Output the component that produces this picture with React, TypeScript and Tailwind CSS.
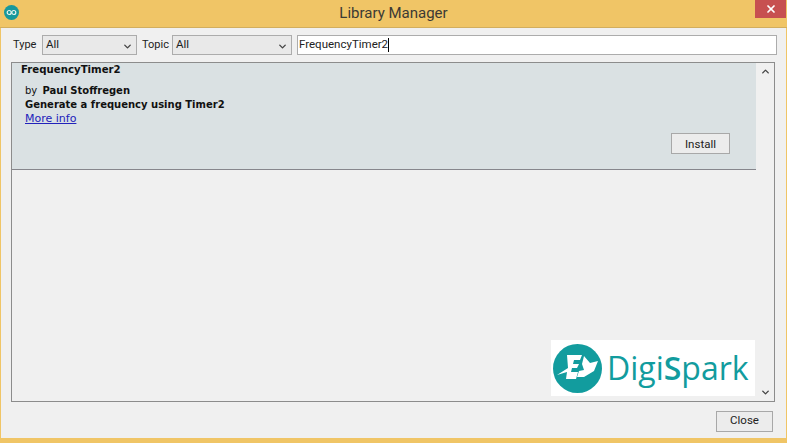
import { ChevronDown, ChevronUp, X } from "lucide-react";

const uiFont = "font-['Roboto','Noto_Sans',sans-serif]";
const itemFont = "font-['DejaVu_Sans',sans-serif]";

const ComboBox = ({ width }: { width: string }) => {
  return (
    <div className={`${width} h-[20px] shrink-0 flex items-center justify-between border border-[#acacac] bg-[#e9e9e9] pl-[3px] pr-[3px]`}>
      <span className="text-[11.5px] text-[#222]">All</span>
      <ChevronDown className="w-[11px] h-[11px] mt-[3px] text-[#444]" strokeWidth={3} />
    </div>
  );
};

const ArduinoLogo = () => {
  return (
    <svg width="15" height="15" viewBox="0 0 15 15">
      <circle cx="7.5" cy="7.5" r="7.5" fill="#17989c" />
      <circle cx="5.2" cy="7.5" r="2" fill="none" stroke="#e8f4ee" strokeWidth="1.2" />
      <circle cx="9.8" cy="7.5" r="2" fill="none" stroke="#e8f4ee" strokeWidth="1.2" />
    </svg>
  );
};

const DigiSparkMark = () => {
  return (
    <svg width="49" height="49" viewBox="0 0 49 49" className="shrink-0">
      <circle cx="24.5" cy="24.5" r="24.5" fill="#129c9e" />
      {/* E block with the streak running out to the left */}
      <path d="M14 11 H29 L27 16 H21 L20 20 H26 L24 24 H19 L18 28 H25 L23 35 H13 L14 28 L4 31 L15 24 Z" fill="#fff" />
      {/* wing on the right */}
      <path d="M29 20 L31 12 L37 19 L45 17 L41 27 L31 33 H24 L26 27 L31 26 Z" fill="#fff" />
    </svg>
  );
};

export default function App() {
  return (
    <div className={`${uiFont} w-[787px] h-[443px] flex flex-col overflow-hidden bg-[#f0c566]`}>
      <header className="relative h-[28px] shrink-0 flex items-center justify-center border-b border-[#d2ae5e]">
        <div className="absolute left-[4px] top-[5px]">
          <ArduinoLogo />
        </div>
        <span className="text-[15px] text-[#3c3a34] -mt-[1px]">Library Manager</span>
        <button className="absolute right-[1px] top-0 w-[31px] h-[18px] flex items-center justify-center bg-[#c75050]">
          <X className="w-[12px] h-[12px] text-white" strokeWidth={3.5} />
        </button>
      </header>

      <div className="ml-[1px] mr-[1px] mb-[5px] flex-1 flex flex-col bg-[#f0f0f0] pl-[10px] pr-[9px] min-h-0 relative">
        <div className="flex items-center h-[34px] shrink-0">
          <span className="w-[31px] pl-[2px] shrink-0 text-[11px] text-[#222]">Type</span>
          <ComboBox width="w-[95px]" />
          <span className="w-[35px] pl-[5px] shrink-0 text-[11px] text-[#222]">Topic</span>
          <ComboBox width="w-[120px]" />
          <div className="flex-1 h-[20px] ml-[5px] flex items-center border border-[#acacac] bg-white pl-[1px] pr-[3px]">
            <span className="text-[11.5px] text-[#222]">FrequencyTimer2</span>
            <span className="w-px h-[14px] bg-black" />
          </div>
        </div>

        <div className="h-[340px] flex border border-[#8c8c8c] shrink-0 mr-[2px]">
          <div className="flex-1 flex flex-col min-w-0">
            <div className={`${itemFont} relative h-[107px] bg-[#dae1e3] border-b border-[#86868c] pl-[9px] text-[#111] text-[10px] leading-[14px]`}>
              <p className="font-bold text-[10.2px]">FrequencyTimer2</p>
              <div className="pl-[4px] pt-[7px]">
                <p>
                  by <span className="font-bold ml-[2px]">Paul Stoffregen</span>
                </p>
                <p className="font-bold">Generate a frequency using Timer2</p>
                <a className="text-[#2222bb] underline text-[11px]">More info</a>
              </div>
              <button className={`${uiFont} absolute right-[26px] top-[70px] w-[59px] h-[21px] flex items-center justify-center border border-[#a8a8a8] bg-[#ececec] text-[11.5px] text-[#222]`}>
                Install
              </button>
            </div>
          </div>
          <div className="w-[18px] shrink-0 flex flex-col items-center justify-between py-[3px]">
            <ChevronUp className="w-[11px] h-[11px] text-[#444]" strokeWidth={3} />
            <ChevronDown className="w-[11px] h-[11px] text-[#444]" strokeWidth={3} />
          </div>
        </div>

        <div className="flex-1 flex items-center justify-end pr-[4px] pt-[2px]">
          <button className="w-[57px] h-[21px] flex items-center justify-center border border-[#a8a8a8] bg-[#ececec] text-[11.5px] text-[#222]">
            Close
          </button>
        </div>

        {/* watermark sits on top of the dialog */}
        <div className="absolute left-[550px] top-[312px] w-[204px] h-[56px] flex items-center bg-white pl-[2px]">
          <DigiSparkMark />
          <span className="ml-[5px] text-[32px] leading-none font-medium text-[#129c9e] font-['Open_Sans',sans-serif]">
            Digi<span className="font-semibold">S</span>park
          </span>
        </div>
      </div>
    </div>
  );
}
